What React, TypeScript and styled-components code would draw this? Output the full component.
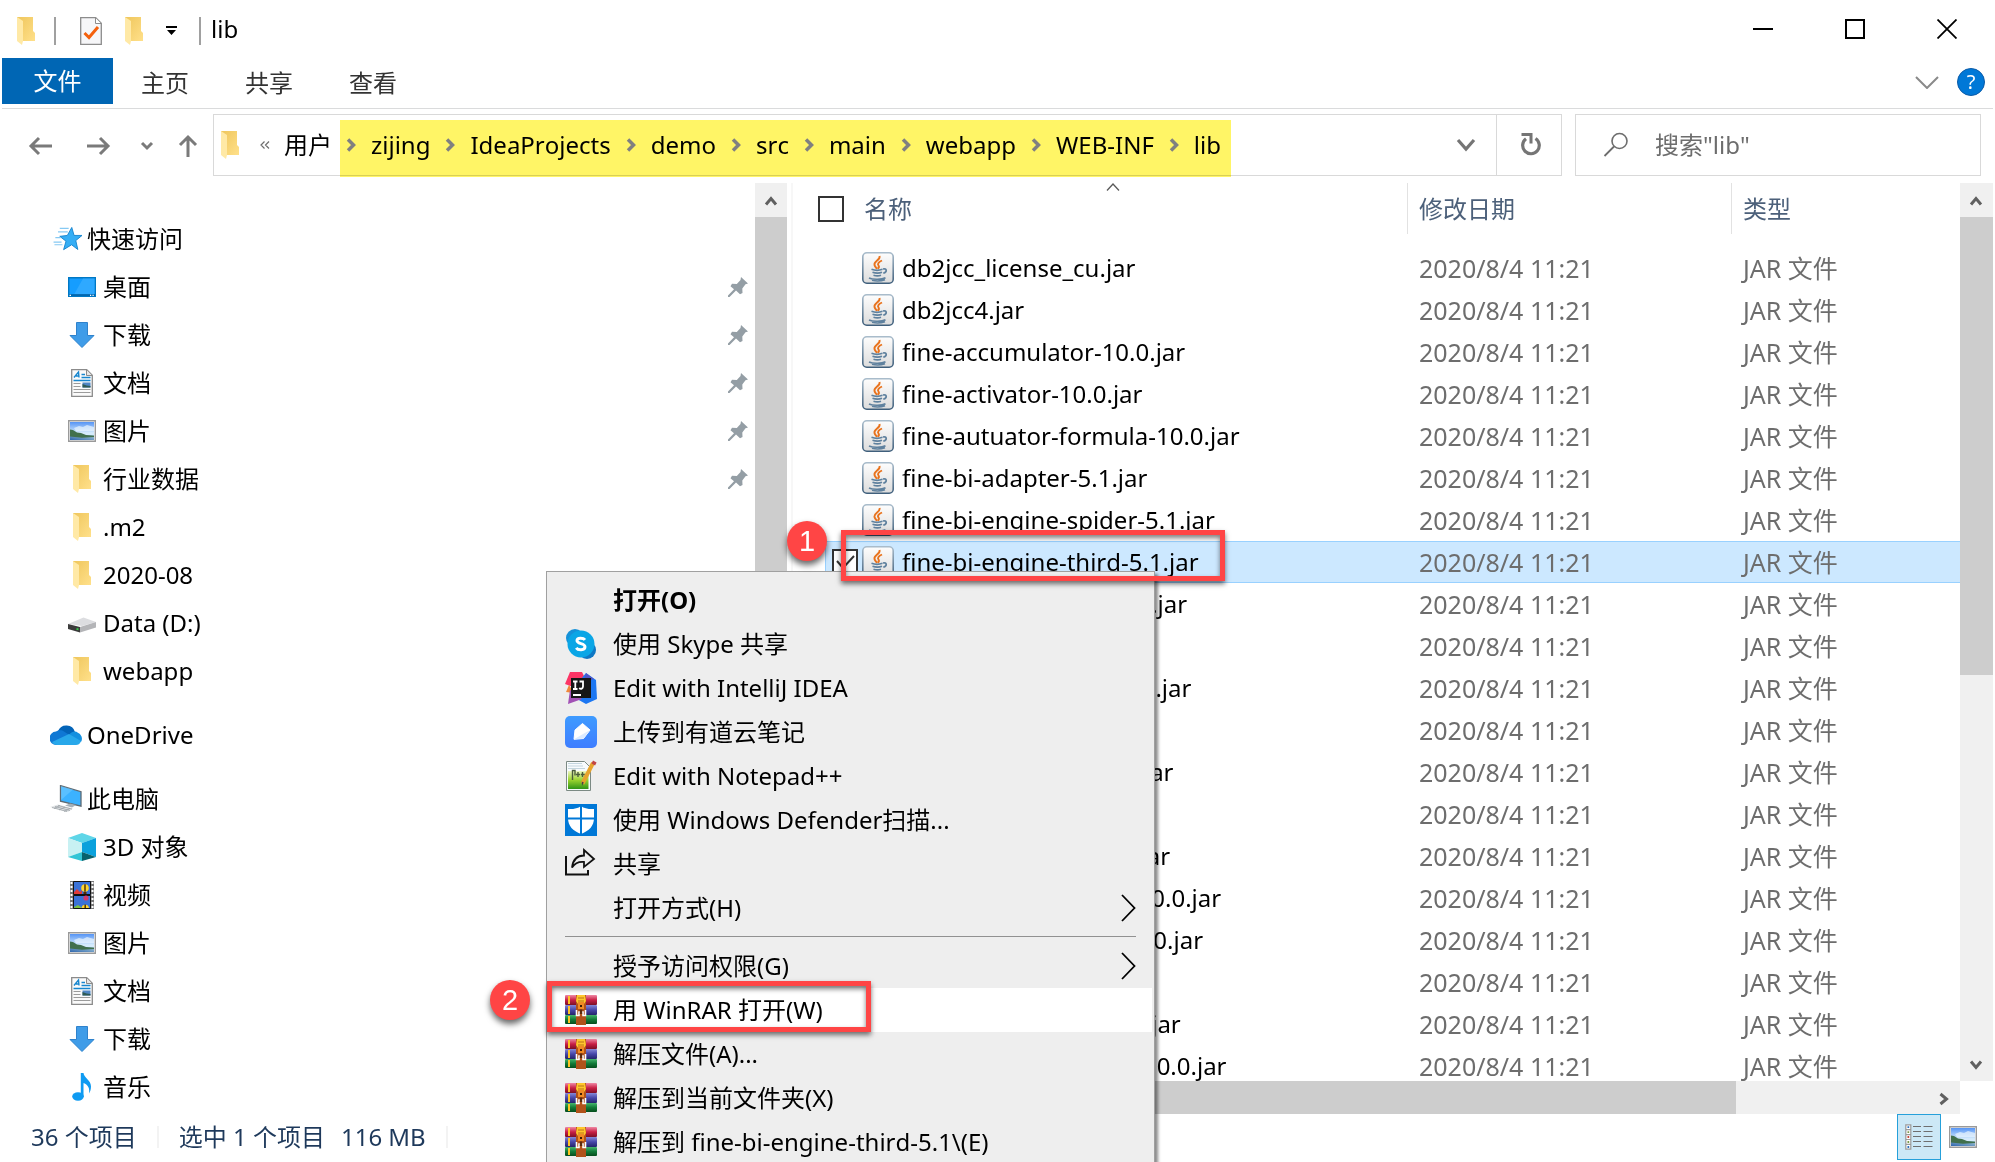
import React from "react";
import styled, { createGlobalStyle, css } from "styled-components";

const GlobalStyle = createGlobalStyle`
  *, *::before, *::after { box-sizing: border-box; }
  html, body { margin: 0; height: 100%; overflow: hidden; background: #fff; }
  body, button, input, table {
    font-family: "Noto Sans", "Noto Sans CJK SC", sans-serif;
    font-size: 24px;
    line-height: 32px;
    font-kerning: none;
    color: #000;
  }
  button { border: 0; padding: 0; background: none; cursor: default; text-align: left; }
  svg { display: block; flex: none; }
`;

/* ---------- window frame ---------- */

const Window = styled.div`
  position: relative;
  height: 100vh;
  display: flex;
  flex-direction: column;
  overflow: hidden;
  padding-right: 2px;
  background: #fff;
`;

const TitleBar = styled.header`
  height: 58px;
  flex: none;
  display: flex;
  align-items: center;
  padding: 0 0 0 16px;
`;

const QuickTools = styled.div`
  display: flex;
  align-items: center;
  height: 58px;
  padding-top: 4px;
`;

const ToolButton = styled.button<{ $left: number }>`
  margin-left: ${(p) => p.$left}px;
`;

const Divider = styled.span<{ $left: number }>`
  width: 2px;
  height: 28px;
  margin-left: ${(p) => p.$left}px;
  background: #a0a0a0;
`;

const WindowTitle = styled.h1`
  margin: 0 0 0 10px;
  font-size: 24px;
  font-weight: 400;
  line-height: 32px;
`;

const WindowControls = styled.div`
  margin-left: auto;
  display: flex;
`;

const ControlButton = styled.button`
  width: 92px;
  height: 58px;
  display: flex;
  align-items: center;
  justify-content: center;
`;

const Ribbon = styled.nav`
  height: 51px;
  flex: none;
  display: flex;
  align-items: flex-start;
  margin-left: 2px;
  border-bottom: 1px solid #dadbdc;
`;

const RibbonTab = styled.button<{ $primary?: boolean }>`
  width: ${(p) => (p.$primary ? 111 : 104)}px;
  height: ${(p) => (p.$primary ? 46 : 50)}px;
  text-align: center;
  color: ${(p) => (p.$primary ? "#fff" : "#333")};
  background: ${(p) => (p.$primary ? "#0066b4" : "transparent")};
`;

const RibbonEnd = styled.div`
  margin-left: auto;
  height: 48px;
  display: flex;
  align-items: center;
  gap: 18px;
  padding-right: 8px;
`;

const HelpButton = styled.button`
  width: 28px;
  height: 28px;
  border: 1px solid #0b5ba8;
  border-radius: 50%;
  background: #0078d7;
  color: #fff;
  font-size: 20px;
  line-height: 26px;
  text-align: center;
`;

/* ---------- address row ---------- */

const AddressRow = styled.div`
  height: 74px;
  flex: none;
  display: flex;
  align-items: flex-start;
  padding: 5px 12px 0 28px;
`;

const HistoryButtons = styled.div`
  width: 185px;
  height: 64px;
  display: flex;
  align-items: center;
`;

const AddressBox = styled.div`
  flex: 1;
  height: 62px;
  display: flex;
  align-items: center;
  border: 1px solid #d9d9d9;
  padding-left: 6px;
`;

const Overflow = styled.button`
  margin: 0 14px 0 20px;
  color: #6e6e6e;
`;

const Marked = styled.div`
  align-self: stretch;
  display: flex;
  align-items: center;
  gap: 15px;
  margin: 5px 0 -2px 8px;
  padding: 0 10px 7px 6px;
  background: #fff566;
  mix-blend-mode: multiply;
`;

const BoxButton = styled.button<{ $bordered?: boolean }>`
  width: 65px;
  align-self: stretch;
  display: flex;
  align-items: center;
  justify-content: center;
  padding-left: 4px;
  margin-left: ${(p) => (p.$bordered ? "0" : "auto")};
  border-left: ${(p) => (p.$bordered ? "1px solid #d9d9d9" : "0")};
`;

const SearchBox = styled.label`
  width: 406px;
  height: 62px;
  margin-left: 13px;
  display: flex;
  align-items: center;
  gap: 26px;
  padding-left: 27px;
  border: 1px solid #d9d9d9;
`;

const SearchInput = styled.input`
  flex: 1;
  min-width: 0;
  border: 0;
  outline: 0;
  padding: 0;
  background: transparent;
  &::placeholder { color: #6d6d6d; opacity: 1; }
`;

/* ---------- body ---------- */

const Body = styled.main`
  flex: 1;
  min-height: 0;
  display: flex;
`;

const NavPane = styled.aside`
  width: 787px;
  flex: none;
  display: flex;
`;

const NavTree = styled.nav`
  flex: 1;
  min-width: 0;
  padding: 32px 7px 0 0;
  overflow: hidden;
`;

const NavGroup = styled.section`
  margin-bottom: 16px;
`;

const NavItem = styled.button<{ $child?: boolean }>`
  width: 100%;
  height: 48px;
  display: flex;
  align-items: center;
  padding-left: ${(p) => (p.$child ? 66 : 50)}px;
`;

const NavIcon = styled.span`
  width: 32px;
  height: 32px;
  display: flex;
  align-items: center;
  justify-content: center;
  margin-right: 5px;
`;

const PinSlot = styled.span`
  margin-left: auto;
`;

const VScroll = styled.div`
  width: 32px;
  flex: none;
  display: flex;
  flex-direction: column;
  background: #f0f0f0;
`;

const ScrollButton = styled.button`
  width: 32px;
  height: 34px;
  flex: none;
  display: flex;
  align-items: center;
  justify-content: center;
  padding-top: 2px;
`;

const Thumb = styled.div<{ $grow: number }>`
  flex: ${(p) => p.$grow};
  background: #cdcdcd;
`;

const Track = styled.div<{ $grow: number }>`
  flex: ${(p) => p.$grow};
`;

const FilePane = styled.section`
  flex: 1;
  min-width: 0;
  display: flex;
  margin-left: 4px;
  border-left: 2px solid #f7f7f7;
`;

const FileColumn = styled.div`
  flex: 1;
  min-width: 0;
  display: flex;
  flex-direction: column;
`;

const FileViewport = styled.div`
  flex: 1;
  min-height: 0;
  overflow: hidden;
`;

const HScroll = styled.div`
  height: 33px;
  flex: none;
  display: flex;
  background: #f0f0f0;
`;

const FileScroll = styled(VScroll)`
  width: 33px;
  margin-bottom: 33px;
`;

const FileTable = styled.table`
  width: 100%;
  table-layout: fixed;
  border-collapse: collapse;
`;

const HeadCell = styled.th<{ $width?: number }>`
  width: ${(p) => (p.$width ? p.$width + "px" : "auto")};
  height: 51px;
  padding: 0;
  text-align: left;
  font-weight: 400;
  color: #4c607a;
`;

const HeadInner = styled.div<{ $first?: boolean }>`
  position: relative;
  height: 51px;
  display: flex;
  align-items: center;
  gap: 20px;
  padding-top: 1px;
  ${(p) =>
    p.$first
      ? css`margin-left: 25px;`
      : css`border-left: 1px solid #e2e2e2; padding-left: 11px;`}
`;

const SortMark = styled.span`
  position: absolute;
  top: 0;
  left: 50%;
  transform: translateX(-50%);
`;

const SpacerRow = styled.tr`
  height: 13px;
`;

const Cell = styled.td<{ $selected?: boolean }>`
  height: 42px;
  padding: 0 0 0 12px;
  font-size: 25px;
  color: #6d6d6d;
  ${(p) =>
    p.$selected &&
    css`
      background: #cce8ff;
      box-shadow: inset 0 1px #99d1ff, inset 0 -1px #99d1ff;
    `}
`;

const NameCell = styled.td`
  height: 42px;
  padding: 0 0 0 32px;
`;

const NameInner = styled.div<{ $selected?: boolean }>`
  height: 42px;
  display: flex;
  align-items: center;
  padding-left: 7px;
  white-space: nowrap;
  ${(p) =>
    p.$selected &&
    css`
      background: #cce8ff;
      box-shadow: inset 1px 0 #99d1ff, inset 0 1px #99d1ff, inset 0 -1px #99d1ff;
    `}
`;

const FileName = styled.label`
  margin-left: 8px;
`;

const Check = styled.input`
  appearance: none;
  flex: none;
  width: 26px;
  height: 26px;
  margin: 0;
  border: 2px solid #333;
  background: #fff;
`;

const RowCheck = styled.span<{ $shown?: boolean }>`
  position: relative;
  width: 26px;
  height: 26px;
  margin-right: 4px;
  display: flex;
  visibility: ${(p) => (p.$shown ? "visible" : "hidden")};
`;

const Tick = styled.span`
  position: absolute;
  inset: 0;
  pointer-events: none;
`;

/* ---------- status bar ---------- */

const StatusBar = styled.footer`
  height: 48px;
  flex: none;
  display: flex;
  align-items: center;
  padding: 0 8px 2px 31px;
  color: #1e395b;
`;

const StatusText = styled.span<{ $left?: number }>`
  margin-left: ${(p) => p.$left ?? 0}px;
`;

const StatusRule = styled.span`
  width: 2px;
  height: 22px;
  margin: 0 20px;
  background: #f3f3f3;
`;

const ViewButtons = styled.div`
  margin-left: auto;
  display: flex;
  align-items: center;
`;

const ViewButton = styled.button<{ $active?: boolean }>`
  width: 44px;
  height: 46px;
  display: flex;
  align-items: center;
  justify-content: center;
  border: 1px solid ${(p) => (p.$active ? "#26a0da" : "transparent")};
  background: ${(p) => (p.$active ? "#cce8f6" : "transparent")};
`;

/* ---------- context menu ---------- */

const Menu = styled.div`
  position: absolute;
  left: 546px;
  top: 571px;
  width: 609px;
  padding: 6px 2px;
  border: 1px solid #a0a0a0;
  background: #eee;
  box-shadow: 3px 3px 3px rgba(0, 0, 0, 0.45);
`;

const MenuItem = styled.button<{ $hot?: boolean; $bold?: boolean }>`
  width: 100%;
  height: 44px;
  display: flex;
  align-items: center;
  padding: 0 16px;
  background: ${(p) => (p.$hot ? "#fff" : "transparent")};
  font-weight: ${(p) => (p.$bold ? 700 : 400)};
`;

const MenuIcon = styled.span`
  width: 32px;
  height: 32px;
  margin-right: 16px;
`;

const MenuArrow = styled.span`
  margin-left: auto;
`;

const MenuRule = styled.hr`
  height: 1px;
  margin: 6px 16px 7px;
  border: 0;
  background: #919191;
`;

/* ---------- step call-outs ---------- */

const Frame = styled.div<{ $x: number; $y: number; $w: number }>`
  position: absolute;
  left: ${(p) => p.$x}px;
  top: ${(p) => p.$y}px;
  width: ${(p) => p.$w}px;
  height: 51px;
  border: 5px solid #ff4545;
  box-shadow: 0 3px 5px rgba(0, 0, 0, 0.55), inset 0 3px 5px rgba(0, 0, 0, 0.5);
  pointer-events: none;
`;

const Badge = styled.span<{ $x: number; $y: number }>`
  position: absolute;
  left: ${(p) => p.$x}px;
  top: ${(p) => p.$y}px;
  width: 40px;
  height: 40px;
  border-radius: 50%;
  background: #ff4545;
  color: #fff;
  font-family: "Liberation Sans", sans-serif;
  font-size: 29px;
  line-height: 40px;
  text-align: center;
  box-shadow: 0 4px 6px rgba(0, 0, 0, 0.6);
`;

/* ---------- drawings ---------- */

const FolderIcon = () => (
  <svg width="20" height="28" viewBox="0 0 20 28">
    <defs>
      <linearGradient id="fold" x1="0" x2="1" y1="0" y2="1">
        <stop offset="0" stopColor="#efc65c" />
        <stop offset="1" stopColor="#ffe08a" />
      </linearGradient>
    </defs>
    <path d="M1 0h16v14l2 2v8H1z" fill="url(#fold)" />
    <path d="M1 0l6 4v20l-1 4-5-4z" fill="#ffe9a6" />
  </svg>
);

const DocCheckIcon = () => (
  <svg width="22" height="28" viewBox="0 0 22 28">
    <path d="M.7.7h15l5.600 5.600v21H.7z" fill="#f6f6f8" stroke="#8c8c8c" strokeWidth="1.300" />
    <path d="M15.500 1v5.500H21" fill="#fff" stroke="#8c8c8c" />
    <path d="M4.500 16l4.500 4.500L18 10" fill="none" stroke="#f4600c" strokeWidth="3" />
  </svg>
);

const DropIcon = () => (
  <svg width="11" height="10" viewBox="0 0 11 10">
    <path d="M0 0h11v2H0zM1 4h9L5.500 9z" fill="#000" />
  </svg>
);

const Stroke = ({
  w,
  h,
  d,
  sw = 2,
  c = "#000",
}: {
  w: number;
  h: number;
  d: string;
  sw?: number;
  c?: string;
}) => (
  <svg width={w} height={h} viewBox={`0 0 ${w} ${h}`}>
    <path d={d} fill="none" stroke={c} strokeWidth={sw} />
  </svg>
);

const Crumb = () => <Stroke w={10} h={14} d="M2 1.500l5.500 5.500L2 12.500" sw={3.500} c="#808080" />;
const UpMark = () => <Stroke w={14} h={12} d="M2 9.500l5-6 5 6" sw={3} c="#606060" />;
const DownMark = () => <Stroke w={14} h={12} d="M2 2.500l5 6 5-6" sw={3} c="#606060" />;
const RightMark = () => <Stroke w={12} h={14} d="M2.500 2l6 5-6 5" sw={3} c="#606060" />;

const RefreshIcon = () => (
  <svg width="22" height="24" viewBox="0 0 22 24">
    <path d="M15.500 5.500A8.300 8.300 0 1 1 6 5.800" fill="none" stroke="#757575" strokeWidth="3.200" />
    <path d="M1.500 1.500h9.500v9" fill="none" stroke="#757575" strokeWidth="3" />
  </svg>
);

const SearchIcon = () => (
  <svg width="26" height="26" viewBox="0 0 26 26">
    <circle cx="16.500" cy="9" r="7.500" fill="none" stroke="#6d6d6d" strokeWidth="1.600" />
    <path d="M11 14.500L1.500 24" stroke="#6d6d6d" strokeWidth="1.800" />
  </svg>
);

const StarIcon = () => (
  <svg width="32" height="28" viewBox="-4 -1 36 31">
    <path d="M20.500 1.500l2.600 9H32l-7 5.800 2.300 10-7-5.300-9 5.500 2.700-9.500L7 11.500l8.500-1z" fill="#35aef5" stroke="#1181cc" />
    <path d="M7 2.500h10M5 6.500h11M2 13h6M0 18h9M1 21h9" stroke="#86c9f3" strokeWidth="1.300" />
  </svg>
);

const DesktopIcon = () => (
  <svg width="28" height="20" viewBox="0 0 28 20">
    <path d="M.7.7h26.600v18.600H.7z" fill="#159dff" stroke="#0078c4" strokeWidth="1.400" />
    <path d="M15 1.400h11.600v16H6z" fill="#45b3ff" opacity=".55" />
    <path d="M1 18h26" stroke="#005fa3" strokeWidth="1.600" />
    <path d="M1.500 18.300h1.500M22 18.300h1.200M24.500 18.300h1.200" stroke="#fff" strokeWidth="1.200" />
  </svg>
);

const DownloadIcon = () => (
  <svg width="26" height="26" viewBox="0 0 26 26">
    <path d="M7.500.5h11v13h6.500L13 25.500 1 13.500h6.500z" fill="#3f9ce8" stroke="#2f82cc" />
  </svg>
);

const DocumentIcon = () => (
  <svg width="22" height="28" viewBox="0 0 22 28">
    <path d="M.7.7h15l5.600 5.600v21H.7z" fill="#fafafa" stroke="#8b8b8b" strokeWidth="1.300" />
    <path d="M15.500 1v5.500H21" fill="#e6e6e6" stroke="#8b8b8b" />
    <path d="M3 8.500L7.500 3 8 8.500M5 7h3" fill="none" stroke="#1686cf" strokeWidth="1.400" />
    <path d="M10.500 5.500H14M10.500 8.500h9M2.500 11.500h17" stroke="#1686cf" strokeWidth="1.300" />
    <path d="M2.500 14.500h7M2.500 17.500h7M2.500 20.500h17M2.500 23.500h17" stroke="#9b9b9b" strokeWidth="1.200" />
    <path d="M11.500 13.500h8v5h-8z" fill="#4f86c5" />
    <path d="M11.500 15l4 1.500 4 .5v1.500h-8z" fill="#2f5a53" />
  </svg>
);

const PictureIcon = () => (
  <svg width="28" height="22" viewBox="0 0 28 22">
    <defs>
      <linearGradient id="sky" x1="0" x2="0" y1="0" y2="1">
        <stop offset="0" stopColor="#5594f5" />
        <stop offset=".6" stopColor="#d5ebfc" />
      </linearGradient>
      <linearGradient id="sea" x1="0" x2="1" y1="1" y2="0">
        <stop offset="0" stopColor="#2f66ad" />
        <stop offset="1" stopColor="#a8cbd9" />
      </linearGradient>
    </defs>
    <path d="M.7.7h26.600v20.600H.7z" fill="#fff" stroke="#9a9a9a" strokeWidth="1.400" />
    <path d="M2 2h24v18H2z" fill="url(#sky)" />
    <path d="M6 8l5-2 4 1 4-2 7 2v4H8z" fill="#e9f5fd" opacity=".7" />
    <path d="M2 15h24v5H2z" fill="url(#sea)" />
    <path d="M2 9.500l3 .5 4 2.500 4 .5 5 2 8 .7v1.200l-12 .8L2 16.500z" fill="#41704c" />
  </svg>
);

const DriveIcon = () => (
  <svg width="28" height="20" viewBox="0 -4 28 20">
    <path d="M0 7L15.500.5 28 5 14 9z" fill="#dcdde0" />
    <path d="M0 7l12 3v5.500L0 12z" fill="#3b3b3b" />
    <path d="M12 10l16-5v5.500l-16 5z" fill="#b4b5b8" />
    <path d="M8.500 11.800l2 .5" stroke="#37d04b" strokeWidth="1.800" />
  </svg>
);

const CloudIcon = () => (
  <svg width="32" height="22" viewBox="0 0 32 22">
    <path d="M8 7a9 9 0 0 1 17 1l-6 6z" fill="#0364b8" />
    <path d="M6.500 21A6.500 6.500 0 0 1 6 7.500c3-2 6-1.500 8 0L24 14z" fill="#0f78d4" />
    <path d="M19 11c3-4 7-4 8.500-2.500A6.500 6.500 0 0 1 31 18z" fill="#1490df" />
    <path d="M2 18l17-8 12 7c-1 3-3 4-5 4H7c-2 0-4-1-5-3z" fill="#28a8ea" />
  </svg>
);

const ComputerIcon = () => (
  <svg width="32" height="28" viewBox="0 0 32 28">
    <path d="M10.500.7l20.500 6v14.500l-20.500-5z" fill="#3cb2ff" stroke="#5e6a73" strokeWidth="1.300" />
    <path d="M11 1l12 3.600L11 15z" fill="#7fd0ff" opacity=".45" />
    <path d="M20 18.500l6 1.500-4 2.500-7-2z" fill="#a6b1b9" />
    <path d="M0 22l8-2.500 15 4-5 3.500z" fill="#e2e5e7" />
    <path d="M2 22.500l15 4M5 21.500l15 4M8 20.500l14 3.600M4 23.500l6-3M9 25l6-3M14 26.500l6-3" stroke="#9aa1a6" strokeWidth=".8" />
  </svg>
);

const CubeIcon = () => (
  <svg width="28" height="28" viewBox="0 0 28 28">
    <path d="M0 5L14 0l14 5-14 5z" fill="#5fd6e8" />
    <path d="M0 5l14 5v9L0 24z" fill="#c8f1f3" />
    <path d="M28 5l-14 5v9l14 5z" fill="#0ba1dc" />
    <path d="M0 24l14-5v9z" fill="#33c5d6" />
    <path d="M28 24l-14-5v9z" fill="#08616d" />
  </svg>
);

const VideoIcon = () => (
  <svg width="24" height="28" viewBox="0 0 24 28">
    <path d="M0 0h24v28H0z" fill="#777" />
    <path d="M1.500 1v27M22.500 1v27" stroke="#fff" strokeWidth="2" strokeDasharray="2 2" />
    <path d="M3.500.5h17v13h-17zM3.500 14.500h17v13h-17z" fill="#3a72d8" stroke="#111" />
    <path d="M4 11l3-3 3 3 2-2v4H4z" fill="#e03a3a" />
    <circle cx="15" cy="7" r="3.800" fill="#ffd52e" />
    <path d="M15 3.200v7.600" stroke="#4a2a00" strokeWidth="1.400" />
    <path d="M13.500 11h3v2h-3z" fill="#572b00" />
    <circle cx="16" cy="17" r="2.600" fill="#d33a6c" />
    <path d="M4 26l4-2 3 2v1H4z" fill="#7bc142" />
    <path d="M11.500 27a3.800 3.800 0 0 1 7.500 0z" fill="#ffd52e" />
    <path d="M15.200 23.500V27" stroke="#4a2a00" strokeWidth="1.400" />
  </svg>
);

const MusicIcon = () => (
  <svg width="20" height="28" viewBox="0 0 20 28">
    <ellipse cx="6" cy="23.500" rx="5.800" ry="4.200" fill="#0f9bf2" />
    <path d="M8.800 0h2.700c.5 5 7.500 7 7.500 13.500 0 3-.8 5-2 7 .8-5-.5-8.500-5.500-10.500V24H8.800z" fill="#0f9bf2" />
  </svg>
);

const PinIcon = () => (
  <svg width="20" height="20" viewBox="0 0 20 20">
    <path d="M13 0l7 6.500-2.500.8-3.200 4.200.2 4.500-2.500 1.200-4-3.800L1.500 20H0v-1.500l6-6.300-3.500-3L4 6.800l4.800.2L12.500 3z" fill="#949ea5" />
  </svg>
);

const JavaIcon = () => (
  <svg width="32" height="32" viewBox="0 0 32 32">
    <defs>
      <linearGradient id="tile" x1="0" x2="0" y1="0" y2="1">
        <stop offset="0" stopColor="#fdfdfd" />
        <stop offset="1" stopColor="#dcdcdc" />
      </linearGradient>
      <linearGradient id="edge" x1="0" x2="0" y1="0" y2="1">
        <stop offset="0" stopColor="#a9bccb" />
        <stop offset="1" stopColor="#3f5f7c" />
      </linearGradient>
    </defs>
    <rect x=".8" y=".8" width="30.400" height="30.400" rx="4" fill="url(#tile)" stroke="url(#edge)" strokeWidth="1.600" />
    <path d="M17.500 4c1.500 4-6 5-5 9 .3 1.500 1.500 2.500 2.500 3.800M20 8.500c-3 1.500-5 3-3.500 5 .8 1.200.5 2.300-.8 3.300" fill="none" stroke="#e9731d" strokeWidth="1.900" />
    <path d="M9.500 17.200c3 1.200 8 1.200 11 0M10.500 20.300c3 1 7 1 9.500 0M11.500 23.200c2.500.8 5.500.8 7.500 0M7 26c4 1.800 13 1.600 16.500-.3M10 28.300c4 1 9 .8 13-.5M21 17c4-1 4.500 3 .3 4.300" fill="none" stroke="#5f819e" strokeWidth="1.700" />
  </svg>
);

const DetailsIcon = () => (
  <svg width="28" height="26" viewBox="0 0 28 26">
    <path d="M.8.8h5v24.400h-5zM.8 5.700h5M.8 10.600h5M.8 15.500h5M.8 20.400h5" fill="#fff" stroke="#9a9a9a" strokeWidth="1.200" />
    <path d="M2.500 3.200h1.700M2.500 23h1.700" stroke="#2a6fc0" strokeWidth="1.800" />
    <path d="M2.500 8.200h1.700M2.500 18h1.700" stroke="#7a9a4a" strokeWidth="1.800" />
    <path d="M2.500 13h1.700" stroke="#c43020" strokeWidth="1.800" />
    <path d="M8 2.500h8M18.500 2.500h9M8 7.500h8M18.500 7.500h9M8 12.500h8M18.500 12.500h9M8 17.500h8M18.500 17.500h9M8 22.500h8M18.500 22.500h9" stroke="#6f6f6f" strokeWidth="1.200" />
  </svg>
);

const SkypeIcon = () => (
  <svg width="32" height="32" viewBox="0 0 32 32">
    <circle cx="10" cy="10" r="9" fill="#1591d8" />
    <circle cx="22" cy="22" r="9" fill="#0f78c4" />
    <circle cx="16" cy="16" r="13.500" fill="#0aa6e6" />
    <path d="M20 11.800c-1.500-2-8-2.600-8 .8 0 3.800 8 2.200 8 6.200 0 3.800-7 3.600-8.800 1" fill="none" stroke="#fff" strokeWidth="3" />
  </svg>
);

const IdeaIcon = () => (
  <svg width="32" height="32" viewBox="0 0 32 32">
    <path d="M5 0h12l4 8-5 10L0 12z" fill="#fc3565" />
    <path d="M21 1l10 7 1 19-11 5-9-5 4-20z" fill="#1c77f2" />
    <path d="M21 1l8 6-11 4z" fill="#4f55c8" />
    <path d="M4 13l5 8-8-1z" fill="#f0883a" />
    <path d="M5 18l12 9-14 5z" fill="#a251b5" />
    <path d="M6 6h20v20H6z" fill="#161616" />
    <path d="M8 9.500h4.500M10.300 9.500v7.500M8 17h4.500M14.500 9.500h3.500v5c0 2.300-2 2.700-4 1.800M8 23h8" fill="none" stroke="#fff" strokeWidth="1.800" />
  </svg>
);

const NoteIcon = () => (
  <svg width="32" height="32" viewBox="0 0 32 32">
    <defs>
      <linearGradient id="note" x1="0" x2="0" y1="0" y2="1">
        <stop offset="0" stopColor="#3e9bff" />
        <stop offset="1" stopColor="#3e7dff" />
      </linearGradient>
    </defs>
    <rect width="32" height="32" rx="5" fill="url(#note)" />
    <path d="M17.500 7.500l7.500 6.500-6.500 8.500-9.500.8 1-9.300z" fill="#fff" stroke="#fff" strokeLinejoin="round" />
    <path d="M25 14l-6.500 8.500-9.500.8z" fill="#dcebff" />
  </svg>
);

const NotepadIcon = () => (
  <svg width="32" height="32" viewBox="0 0 32 32">
    <defs>
      <linearGradient id="pad" x1="0" x2="0" y1="0" y2="1">
        <stop offset="0" stopColor="#eef6c2" />
        <stop offset=".5" stopColor="#9bd32f" />
        <stop offset="1" stopColor="#2f9417" />
      </linearGradient>
    </defs>
    <path d="M1.500 1.500h18l6 6v23h-24z" fill="#f8fbfd" stroke="#7c8a84" />
    <path d="M3 11h20.500v18H3z" fill="url(#pad)" />
    <path d="M3 3.500h14M3 6h15M3 8.500h17" stroke="#c3d5de" />
    <path d="M7.500 20V10.500h2.500v5M13 12v5M11 14.500h4M17.500 12v5M15.800 14.500h4" fill="none" stroke="#4b5c3c" strokeWidth="1.400" />
    <path d="M28 3L17.500 23.500" stroke="#e7a32d" strokeWidth="4" />
    <path d="M29.800 1.500l-1.500 3" stroke="#c24545" strokeWidth="4" />
    <path d="M18.800 22.500L17 26l-.3-4.500z" fill="#444" />
  </svg>
);

const DefenderIcon = () => (
  <svg width="32" height="32" viewBox="0 0 32 32">
    <path d="M0 0h32v32H0z" fill="#0078d7" />
    <path d="M16 2c3 2.500 8 3.300 13 3v9c0 8-5 13-13 16C8 27 3 22 3 14V5c5 .3 10-.5 13-3z" fill="#fff" />
    <path d="M16 0v32M0 14.500h32" stroke="#0078d7" strokeWidth="2" />
  </svg>
);

const ShareIcon = () => (
  <svg width="32" height="32" viewBox="0 0 32 32">
    <path d="M1 8v18.500h22V22" fill="none" stroke="#111" strokeWidth="2" />
    <path d="M7 19.500c1-8 5-12 12-12V2l10 9-10 8v-5c-5-.5-9 1-12 5.500z" fill="none" stroke="#111" strokeWidth="1.800" />
  </svg>
);

const WinRarIcon = () => (
  <svg width="32" height="32" viewBox="0 0 32 32">
    <defs>
      <linearGradient id="bk1" x1="0" x2="0" y1="0" y2="1">
        <stop offset="0" stopColor="#f08aa5" />
        <stop offset=".5" stopColor="#c81f45" />
        <stop offset="1" stopColor="#7c0f26" />
      </linearGradient>
      <linearGradient id="bk2" x1="0" x2="0" y1="0" y2="1">
        <stop offset="0" stopColor="#8688d8" />
        <stop offset=".5" stopColor="#4646a8" />
        <stop offset="1" stopColor="#24246a" />
      </linearGradient>
      <linearGradient id="bk3" x1="0" x2="0" y1="0" y2="1">
        <stop offset="0" stopColor="#46b56c" />
        <stop offset=".5" stopColor="#127a38" />
        <stop offset="1" stopColor="#064d1c" />
      </linearGradient>
    </defs>
    <rect x="0" y="1" width="32" height="10" rx="1" fill="url(#bk1)" />
    <rect x="0" y="11" width="32" height="10" rx="1" fill="url(#bk2)" />
    <rect x="0" y="21" width="32" height="9" rx="1" fill="url(#bk3)" />
    <path d="M4 2v8M4 12v8M4 22v7" stroke="#ffc423" strokeWidth="2" />
    <path d="M11 1h10v30H11z" fill="#b0521a" />
    <path d="M12 1h8l1 6-2 3h-6l-2-3z" fill="#ffc62c" />
    <path d="M13 4h6M13 7h6" stroke="#b9731a" />
    <path d="M13 8h6v7h-6z" fill="#f08a24" />
    <path d="M15 11h2v2h-2z" fill="#3a1a05" />
    <path d="M11.500 16v5.500h2.500V18h4v3.500h2.500V16" fill="none" stroke="#fff" strokeWidth="1.600" />
    <path d="M14.800 15.500h2.400v4.500h-2.400z" fill="#5b2a0c" />
  </svg>
);

/* ---------- data ---------- */

type Entry = { label: string; icon: React.ReactNode; pinned?: boolean };

const quickAccess: Entry[] = [
  { label: "桌面", icon: <DesktopIcon />, pinned: true },
  { label: "下载", icon: <DownloadIcon />, pinned: true },
  { label: "文档", icon: <DocumentIcon />, pinned: true },
  { label: "图片", icon: <PictureIcon />, pinned: true },
  { label: "行业数据", icon: <FolderIcon />, pinned: true },
  { label: ".m2", icon: <FolderIcon /> },
  { label: "2020-08", icon: <FolderIcon /> },
  { label: "Data (D:)", icon: <DriveIcon /> },
  { label: "webapp", icon: <FolderIcon /> },
];

const thisPc: Entry[] = [
  { label: "3D 对象", icon: <CubeIcon /> },
  { label: "视频", icon: <VideoIcon /> },
  { label: "图片", icon: <PictureIcon /> },
  { label: "文档", icon: <DocumentIcon /> },
  { label: "下载", icon: <DownloadIcon /> },
  { label: "音乐", icon: <MusicIcon /> },
];

const groups: { title: string; icon: React.ReactNode; items: Entry[] }[] = [
  { title: "快速访问", icon: <StarIcon />, items: quickAccess },
  { title: "OneDrive", icon: <CloudIcon />, items: [] },
  { title: "此电脑", icon: <ComputerIcon />, items: thisPc },
];

const crumbs = ["zijing", "IdeaProjects", "demo", "src", "main", "webapp", "WEB-INF", "lib"];

const selectedFile = "fine-bi-engine-third-5.1.jar";

const files = [
  "db2jcc_license_cu.jar",
  "db2jcc4.jar",
  "fine-accumulator-10.0.jar",
  "fine-activator-10.0.jar",
  "fine-autuator-formula-10.0.jar",
  "fine-bi-adapter-5.1.jar",
  "fine-bi-engine-spider-5.1.jar",
  selectedFile,
  "fine-data-convert-10.0.jar",
  "fine-cbb-10.0.jar",
  "fine-data-connect-10.0.jar",
  "fine-core-10.0.jar",
  "fine-component-10.0.jar",
  "fine-db-10.0.jar",
  "fine-datasource-10.0.jar",
  "fine-report-platform-10.0.jar",
  "fine-report-control-10.0.jar",
  "fine-log-10.0.jar",
  "fine-permissions-10.0.jar",
  "fine-report-database-10.0.jar",
];

type Command = { label: string; icon?: React.ReactNode; bold?: boolean; hot?: boolean; sub?: boolean };

const openCommands: Command[] = [
  { label: "打开(O)", bold: true },
  { label: "使用 Skype 共享", icon: <SkypeIcon /> },
  { label: "Edit with IntelliJ IDEA", icon: <IdeaIcon /> },
  { label: "上传到有道云笔记", icon: <NoteIcon /> },
  { label: "Edit with Notepad++", icon: <NotepadIcon /> },
  { label: "使用 Windows Defender扫描...", icon: <DefenderIcon /> },
  { label: "共享", icon: <ShareIcon /> },
  { label: "打开方式(H)", sub: true },
];

const archiveCommands: Command[] = [
  { label: "授予访问权限(G)", sub: true },
  { label: "用 WinRAR 打开(W)", icon: <WinRarIcon />, hot: true },
  { label: "解压文件(A)...", icon: <WinRarIcon /> },
  { label: "解压到当前文件夹(X)", icon: <WinRarIcon /> },
  { label: "解压到 fine-bi-engine-third-5.1\\(E)", icon: <WinRarIcon /> },
];

const renderCommand = (c: Command) => (
  <MenuItem key={c.label} role="menuitem" $hot={c.hot} $bold={c.bold}>
    <MenuIcon>{c.icon}</MenuIcon>
    {c.label}
    {c.sub && (
      <MenuArrow>
        <Stroke w={15} h={28} d="M1 1l12.500 13L1 27" sw={1.8} />
      </MenuArrow>
    )}
  </MenuItem>
);

export default function App() {
  return (
    <>
      <GlobalStyle />
      <Window>
        <TitleBar>
          <QuickTools>
            <FolderIcon />
            <Divider $left={18} />
            <ToolButton $left={24} aria-label="属性"><DocCheckIcon /></ToolButton>
            <ToolButton $left={22} aria-label="新建文件夹"><FolderIcon /></ToolButton>
            <ToolButton $left={22} aria-label="自定义"><DropIcon /></ToolButton>
            <Divider $left={22} />
          </QuickTools>
          <WindowTitle>lib</WindowTitle>
          <WindowControls>
            <ControlButton aria-label="最小化"><Stroke w={20} h={20} d="M0 10h20" /></ControlButton>
            <ControlButton aria-label="最大化"><Stroke w={20} h={20} d="M1 1h18v18H1z" /></ControlButton>
            <ControlButton aria-label="关闭"><Stroke w={20} h={20} d="M.5.5l19 19M19.500.5l-19 19" sw={1.8} /></ControlButton>
          </WindowControls>
        </TitleBar>

        <Ribbon>
          <RibbonTab $primary>文件</RibbonTab>
          <RibbonTab>主页</RibbonTab>
          <RibbonTab>共享</RibbonTab>
          <RibbonTab>查看</RibbonTab>
          <RibbonEnd>
            <button aria-label="展开功能区"><Stroke w={24} h={13} d="M1 1l11 11L23 1" c="#8a8a8a" /></button>
            <HelpButton aria-label="帮助">?</HelpButton>
          </RibbonEnd>
        </Ribbon>

        <AddressRow>
          <HistoryButtons>
            <button aria-label="后退"><Stroke w={24} h={20} d="M11 2l-8 8 8 8M3 10h21" sw={3} c="#7a7a7a" /></button>
            <ToolButton $left={35} aria-label="前进"><Stroke w={24} h={20} d="M13 2l8 8-8 8M21 10H0" sw={3} c="#7a7a7a" /></ToolButton>
            <ToolButton $left={29} aria-label="最近位置"><Stroke w={14} h={10} d="M2 2l5 5 5-5" sw={3} c="#7a7a7a" /></ToolButton>
            <ToolButton $left={24} aria-label="上移"><Stroke w={20} h={24} d="M2 11l8-8 8 8M10 3v20" sw={3} c="#7a7a7a" /></ToolButton>
          </HistoryButtons>
          <AddressBox>
            <FolderIcon />
            <Overflow aria-label="上级路径"><Stroke w={10} h={8} d="M4.500.5L1 4l3.500 3.500M9 .5L5.500 4 9 7.500" sw={1.2} c="#6e6e6e" /></Overflow>
            <button>用户</button>
            <Marked>
              {crumbs.map((c) => (
                <React.Fragment key={c}>
                  <Crumb />
                  <button>{c}</button>
                </React.Fragment>
              ))}
            </Marked>
            <BoxButton aria-label="历史记录"><Stroke w={20} h={14} d="M2 2l8 9 8-9" sw={3.2} c="#757575" /></BoxButton>
            <BoxButton $bordered aria-label="刷新"><RefreshIcon /></BoxButton>
          </AddressBox>
          <SearchBox>
            <SearchIcon />
            <SearchInput type="text" placeholder={'搜索"lib"'} aria-label="搜索" />
          </SearchBox>
        </AddressRow>

        <Body>
          <NavPane>
            <NavTree>
              {groups.map((g) => (
                <NavGroup key={g.title}>
                  <NavItem>
                    <NavIcon>{g.icon}</NavIcon>
                    {g.title}
                  </NavItem>
                  {g.items.map((i) => (
                    <NavItem key={i.label} $child>
                      <NavIcon>{i.icon}</NavIcon>
                      {i.label}
                      {i.pinned && <PinSlot><PinIcon /></PinSlot>}
                    </NavItem>
                  ))}
                </NavGroup>
              ))}
            </NavTree>
            <VScroll>
              <ScrollButton aria-label="向上滚动"><UpMark /></ScrollButton>
              <Thumb $grow={3} />
              <Track $grow={2} />
            </VScroll>
          </NavPane>

          <FilePane>
            <FileColumn>
              <FileViewport>
                <FileTable>
                  <thead>
                    <tr>
                      <HeadCell>
                        <HeadInner $first>
                          <Check type="checkbox" aria-label="全选" />
                          名称
                          <SortMark><Stroke w={14} h={8} d="M1 7.500l6-6.500 6 6.500" sw={1.3} c="#5a5a5a" /></SortMark>
                        </HeadInner>
                      </HeadCell>
                      <HeadCell $width={324}><HeadInner>修改日期</HeadInner></HeadCell>
                      <HeadCell $width={229}><HeadInner>类型</HeadInner></HeadCell>
                    </tr>
                  </thead>
                  <tbody>
                    <SpacerRow />
                    {files.map((f) => {
                      const selected = f === selectedFile;
                      return (
                        <tr key={f}>
                          <NameCell>
                            <NameInner $selected={selected}>
                              <RowCheck $shown={selected}>
                                <Check type="checkbox" id={f} defaultChecked={selected} />
                                <Tick><Stroke w={26} h={26} d="M5 12l6 7L22 7" sw={2} c="#333" /></Tick>
                              </RowCheck>
                              <JavaIcon />
                              <FileName htmlFor={f}>{f}</FileName>
                            </NameInner>
                          </NameCell>
                          <Cell $selected={selected}>2020/8/4 11:21</Cell>
                          <Cell $selected={selected}>JAR 文件</Cell>
                        </tr>
                      );
                    })}
                  </tbody>
                </FileTable>
              </FileViewport>
              <HScroll>
                <Thumb $grow={943} />
                <Track $grow={192} />
                <ScrollButton aria-label="向右滚动"><RightMark /></ScrollButton>
              </HScroll>
            </FileColumn>
            <FileScroll>
              <ScrollButton aria-label="向上滚动"><UpMark /></ScrollButton>
              <Thumb $grow={458} />
              <Track $grow={372} />
              <ScrollButton aria-label="向下滚动"><DownMark /></ScrollButton>
            </FileScroll>
          </FilePane>
        </Body>

        <StatusBar>
          <StatusText>36 个项目</StatusText>
          <StatusRule />
          <StatusText>选中 1 个项目</StatusText>
          <StatusText $left={16}>116 MB</StatusText>
          <StatusRule />
          <ViewButtons>
            <ViewButton $active aria-label="详细信息"><DetailsIcon /></ViewButton>
            <ViewButton aria-label="大图标"><PictureIcon /></ViewButton>
          </ViewButtons>
        </StatusBar>

        <Menu role="menu">
          {openCommands.map(renderCommand)}
          <MenuRule />
          {archiveCommands.map(renderCommand)}
        </Menu>

        <Frame $x={841} $y={530} $w={384} />
        <Badge $x={787} $y={521}>1</Badge>
        <Frame $x={547} $y={981} $w={324} />
        <Badge $x={490} $y={980}>2</Badge>
      </Window>
    </>
  );
}
